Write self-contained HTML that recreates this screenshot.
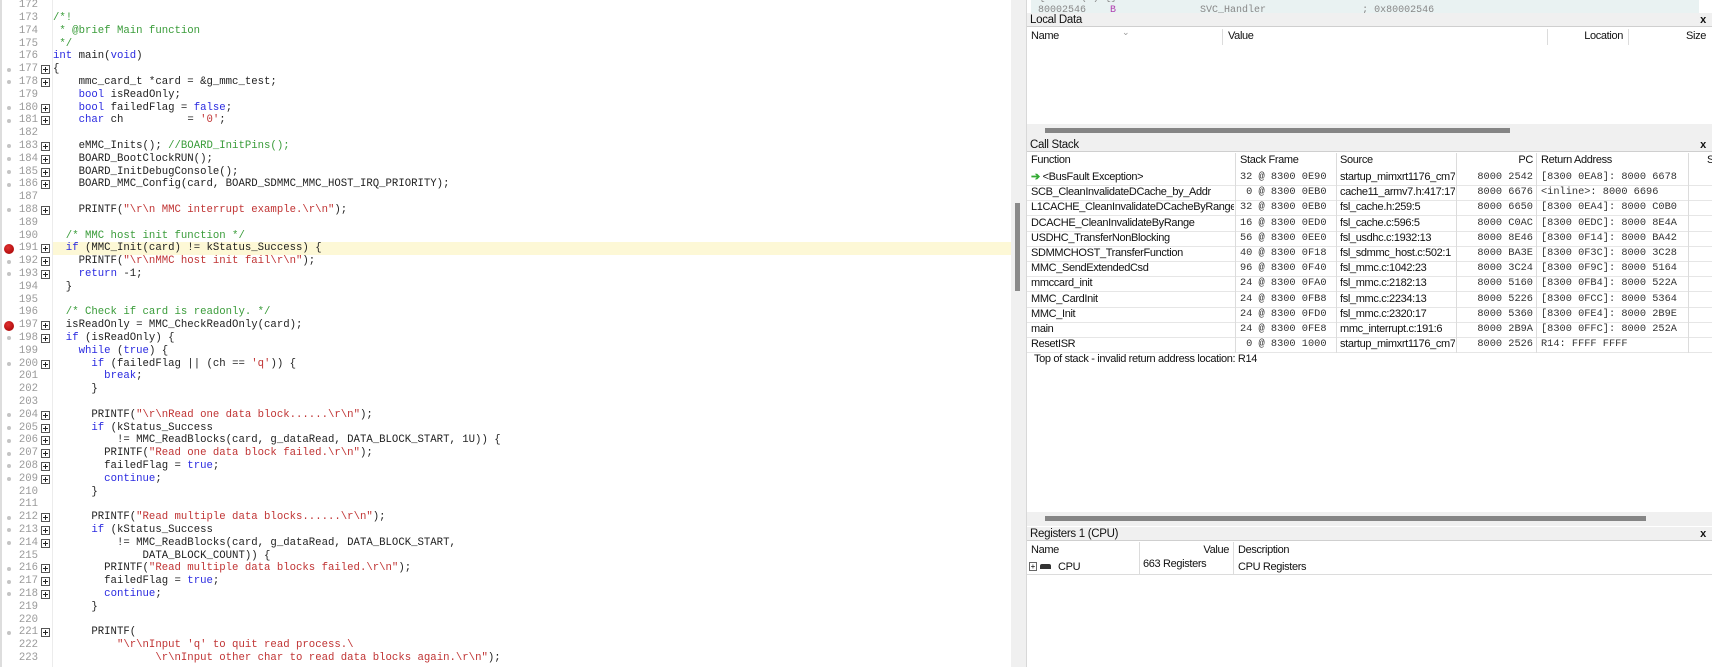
<!DOCTYPE html>
<html><head><meta charset="utf-8"><style>
*{margin:0;padding:0;box-sizing:border-box}
body{width:1712px;height:667px;overflow:hidden;background:#fff;position:relative;font-family:"Liberation Sans",sans-serif;}
.ab{position:absolute}
#code{position:absolute;left:0;top:0;width:1011px;height:667px;background:#fff;overflow:hidden}
.ln{position:absolute;left:0;height:12.8px;width:1011px;font-family:"Liberation Mono",monospace;font-size:10.67px;line-height:12.8px;white-space:pre;color:#222}
.num{position:absolute;left:14px;width:24px;text-align:right;color:#9a9a9a}
.tx{position:absolute;left:53px}
.dot{position:absolute;left:7px;top:4.5px;width:4px;height:4px;border-radius:50%;background:#c4c4c4}
.bp{position:absolute;left:4px;top:1.5px;width:10px;height:10px;border-radius:50%;background:radial-gradient(circle at 40% 35%,#e03030,#a00000)}
.pl{position:absolute;left:41px;top:2px;width:9px;height:9px;border:1px solid #555;background:#fff}
.pl:before{content:"";position:absolute;left:1px;top:3px;width:5px;height:1px;background:#222}
.pl:after{content:"";position:absolute;left:3px;top:1px;width:1px;height:5px;background:#222}
.k{color:#2a2ae0}.s{color:#c03434}.c{color:#3a9c3a}
.hdr{position:absolute;left:1027px;width:685px;height:14px;background:#f0f0f0;border-bottom:1px solid #cfcfcf;font-size:11.5px;line-height:14px;padding-left:3px;color:#111;letter-spacing:-0.3px}
.x{position:absolute;right:6px;top:0;font-weight:bold;font-size:11px}
.t{position:absolute;font-size:11px;line-height:15px;color:#111;white-space:nowrap;letter-spacing:-0.35px}
.m{position:absolute;font-family:"Liberation Mono",monospace;font-size:10.3px;line-height:15px;color:#333;white-space:pre}
.vl{position:absolute;width:1px;background:#dcdcdc}
.hl{position:absolute;height:1px;background:#e6e6e6}
</style></head><body>
<div id="code">
<div class="ab" style="left:0;top:0;width:2px;height:667px;background:#ddd"></div>
<div class="ab" style="left:52px;top:0;width:1px;height:667px;background:#ececec"></div>
<div class="ab" style="left:53px;top:242.2px;width:958px;height:12.8px;background:#fdf8d6"></div>
<div id="lines"></div>
</div>
<div class="ab" style="left:1011px;top:0;width:16px;height:667px;background:#f0f0f0"></div>
<div class="ab" style="left:1015px;top:203px;width:5px;height:88px;background:#8a8a8a"></div>
<div class="ab" style="left:1026px;top:0;width:1px;height:667px;background:#d8d8d8"></div>

<div class="ab" style="left:1027px;top:0;width:685px;height:13px;background:#fff"></div>
<div class="ab" style="left:1031px;top:0;width:668px;height:13px;background:#e9f2f2;overflow:hidden;font-family:'Liberation Mono',monospace;font-size:10px;color:#888;white-space:pre"><div style="position:absolute;top:-7px;left:8px">{ while(1) {}</div><div style="position:absolute;top:5px;left:7px">80002546    <span style="color:#b040b0">B</span>              SVC_Handler                ; 0x80002546</div></div>

<div class="hdr" style="top:13px">Local Data<span class="x">x</span></div>
<div class="t" style="left:1031px;top:29px">Name</div>
<div class="ab" style="left:1122px;top:27px;font-size:9px;color:#999">&#8964;</div>
<div class="vl" style="left:1222px;top:29px;height:16px"></div>
<div class="t" style="left:1228px;top:29px">Value</div>
<div class="vl" style="left:1547px;top:29px;height:16px"></div>
<div class="t" style="left:1560px;top:29px;width:63px;text-align:right">Location</div>
<div class="vl" style="left:1628px;top:29px;height:16px"></div>
<div class="t" style="left:1640px;top:29px;width:66px;text-align:right">Size</div>
<div class="ab" style="left:1027px;top:124px;width:685px;height:14px;background:#f0f0f0"></div>
<div class="ab" style="left:1045px;top:128px;width:465px;height:5px;background:#858585"></div>

<div class="hdr" style="top:138px">Call Stack<span class="x">x</span></div>
<div id="cs"></div>
<div class="t" style="left:1034px;top:352px">Top of stack - invalid return address location: R14</div>

<div class="ab" style="left:1027px;top:512px;width:685px;height:14px;background:#f0f0f0"></div>
<div class="ab" style="left:1045px;top:516px;width:601px;height:5px;background:#858585"></div>

<div class="hdr" style="top:527px">Registers 1 (CPU)<span class="x">x</span></div>
<div class="t" style="left:1031px;top:543px">Name</div>
<div class="vl" style="left:1139px;top:542px;height:32px"></div>
<div class="t" style="left:1140px;top:543px;width:89px;text-align:right">Value</div>
<div class="vl" style="left:1233px;top:542px;height:32px"></div>
<div class="t" style="left:1238px;top:543px">Description</div>
<div class="ab" style="left:1029px;top:562px;width:8px;height:9px;border:1px solid #666;font-size:8px;line-height:7px;text-align:center">+</div>
<div class="ab" style="left:1040px;top:564px;width:11px;height:5px;background:#333;border-radius:2px 2px 0 0"></div>
<div class="t" style="left:1058px;top:560px">CPU</div>
<div class="t" style="left:1143px;top:557px">663 Registers</div>
<div class="t" style="left:1238px;top:560px">CPU Registers</div>
<div class="hl" style="left:1027px;top:574px;width:685px;background:#dcdcdc"></div>

<script>
const L=[
[172,0,''],[173,0,'<span class=c>/*!</span>'],[174,0,'<span class=c> * @brief Main function</span>'],[175,0,'<span class=c> */</span>'],
[176,0,'<span class=k>int</span> main(<span class=k>void</span>)'],[177,1,'{'],
[178,1,'    mmc_card_t *card = &amp;g_mmc_test;'],[179,0,'    <span class=k>bool</span> isReadOnly;'],
[180,1,'    <span class=k>bool</span> failedFlag = <span class=k>false</span>;'],[181,1,'    <span class=k>char</span> ch          = <span class=s>\'0\'</span>;'],
[182,0,''],[183,1,'    eMMC_Inits(); <span class=c>//BOARD_InitPins();</span>'],[184,1,'    BOARD_BootClockRUN();'],
[185,1,'    BOARD_InitDebugConsole();'],[186,1,'    BOARD_MMC_Config(card, BOARD_SDMMC_MMC_HOST_IRQ_PRIORITY);'],
[187,0,''],[188,1,'    PRINTF(<span class=s>"\\r\\n MMC interrupt example.\\r\\n"</span>);'],[189,0,''],
[190,0,'  <span class=c>/* MMC host init function */</span>'],[191,2,'  <span class=k>if</span> (MMC_Init(card) != kStatus_Success) {'],
[192,1,'    PRINTF(<span class=s>"\\r\\nMMC host init fail\\r\\n"</span>);'],[193,1,'    <span class=k>return</span> -1;'],
[194,0,'  }'],[195,0,''],[196,0,'  <span class=c>/* Check if card is readonly. */</span>'],
[197,2,'  isReadOnly = MMC_CheckReadOnly(card);'],[198,1,'  <span class=k>if</span> (isReadOnly) {'],
[199,0,'    <span class=k>while</span> (<span class=k>true</span>) {'],[200,1,'      <span class=k>if</span> (failedFlag || (ch == <span class=s>\'q\'</span>)) {'],
[201,0,'        <span class=k>break</span>;'],[202,0,'      }'],[203,0,''],
[204,1,'      PRINTF(<span class=s>"\\r\\nRead one data block......\\r\\n"</span>);'],[205,1,'      <span class=k>if</span> (kStatus_Success'],
[206,1,'          != MMC_ReadBlocks(card, g_dataRead, DATA_BLOCK_START, 1U)) {'],
[207,1,'        PRINTF(<span class=s>"Read one data block failed.\\r\\n"</span>);'],[208,1,'        failedFlag = <span class=k>true</span>;'],
[209,1,'        <span class=k>continue</span>;'],[210,0,'      }'],[211,0,''],
[212,1,'      PRINTF(<span class=s>"Read multiple data blocks......\\r\\n"</span>);'],[213,1,'      <span class=k>if</span> (kStatus_Success'],
[214,1,'          != MMC_ReadBlocks(card, g_dataRead, DATA_BLOCK_START,'],[215,0,'              DATA_BLOCK_COUNT)) {'],
[216,1,'        PRINTF(<span class=s>"Read multiple data blocks failed.\\r\\n"</span>);'],[217,1,'        failedFlag = <span class=k>true</span>;'],
[218,1,'        <span class=k>continue</span>;'],[219,0,'      }'],[220,0,''],[221,1,'      PRINTF('],
[222,0,'          <span class=s>"\\r\\nInput \'q\' to quit read process.\\</span>'],
[223,0,'                <span class=s>\\r\\nInput other char to read data blocks again.\\r\\n"</span>);']];
let h='';L.forEach((r,i)=>{const y=-0.9+i*12.8;let g='';
if(r[1]==1)g='<span class=dot></span><span class=pl></span>';if(r[1]==2)g='<span class=bp></span><span class=pl></span>';
h+=`<div class=ln style="top:${y}px">${g}<span class=num>${r[0]}</span><span class=tx>${r[2]}</span></div>`;});
document.getElementById('lines').innerHTML=h;
const C=[['<span style="color:#3a3;font-weight:bold">&#10132;</span> &lt;BusFault Exception&gt;','32 @ 8300 0E90','startup_mimxrt1176_cm7','8000 2542','[8300 0EA8]: 8000 6678'],
['SCB_CleanInvalidateDCache_by_Addr',' 0 @ 8300 0EB0','cache11_armv7.h:417:17','8000 6676','&lt;inline&gt;: 8000 6696'],
['L1CACHE_CleanInvalidateDCacheByRange','32 @ 8300 0EB0','fsl_cache.h:259:5','8000 6650','[8300 0EA4]: 8000 C0B0'],
['DCACHE_CleanInvalidateByRange','16 @ 8300 0ED0','fsl_cache.c:596:5','8000 C0AC','[8300 0EDC]: 8000 8E4A'],
['USDHC_TransferNonBlocking','56 @ 8300 0EE0','fsl_usdhc.c:1932:13','8000 8E46','[8300 0F14]: 8000 BA42'],
['SDMMCHOST_TransferFunction','40 @ 8300 0F18','fsl_sdmmc_host.c:502:1','8000 BA3E','[8300 0F3C]: 8000 3C28'],
['MMC_SendExtendedCsd','96 @ 8300 0F40','fsl_mmc.c:1042:23','8000 3C24','[8300 0F9C]: 8000 5164'],
['mmccard_init','24 @ 8300 0FA0','fsl_mmc.c:2182:13','8000 5160','[8300 0FB4]: 8000 522A'],
['MMC_CardInit','24 @ 8300 0FB8','fsl_mmc.c:2234:13','8000 5226','[8300 0FCC]: 8000 5364'],
['MMC_Init','24 @ 8300 0FD0','fsl_mmc.c:2320:17','8000 5360','[8300 0FE4]: 8000 2B9E'],
['main','24 @ 8300 0FE8','mmc_interrupt.c:191:6','8000 2B9A','[8300 0FFC]: 8000 252A'],
['ResetISR',' 0 @ 8300 1000','startup_mimxrt1176_cm7','8000 2526','R14: FFFF FFFF']];
let s=`<div class=t style="left:1031px;top:153px">Function</div><div class=t style="left:1240px;top:153px">Stack Frame</div><div class=t style="left:1340px;top:153px">Source</div><div class=t style="left:1460px;top:153px;width:73px;text-align:right">PC</div><div class=t style="left:1541px;top:153px">Return Address</div><div class=t style="left:1707px;top:153px">S</div>`;
C.forEach((r,i)=>{const y=170+i*15.2;
s+=`<div class=t style="left:1031px;top:${y}px;width:203px;overflow:hidden">${r[0]}</div><div class=m style="left:1240px;top:${y}px">${r[1]}</div><div class=t style="left:1340px;top:${y}px;width:115px;overflow:hidden">${r[2]}</div><div class=m style="left:1460px;top:${y}px;width:73px;text-align:right">${r[3]}</div><div class=m style="left:1541px;top:${y}px">${r[4]}</div><div class=hl style="left:1027px;top:${y+15}px;width:685px"></div>`;});
['1235','1336','1456','1536','1688'].forEach(x=>{s+=`<div class=vl style="left:${x}px;top:153px;height:200px"></div>`});
document.getElementById('cs').innerHTML=s;
</script>
</body></html>
